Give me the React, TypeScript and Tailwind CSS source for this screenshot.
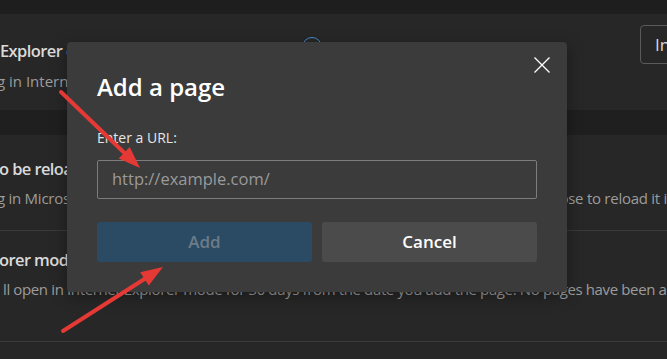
import React from "react";

const FONT = "font-['Open_Sans','Noto_Sans',sans-serif]";

export default function App() {
  return (
    <div className={`relative w-[667px] h-[359px] overflow-hidden bg-[#1f1f1f] ${FONT}`}>
      {/* top strip */}
      <div className="h-[14px] bg-[#1e1e1e]" />

      {/* card 1 */}
      <div className="h-[96px] bg-[#272727] flex items-start overflow-hidden">
        <div className="w-[640px] shrink-0 pt-[25px] overflow-hidden">
          <div className="flex items-start">
            <div className="w-[302px] shrink-0 overflow-hidden whitespace-nowrap text-[16.5px] leading-[24px] font-semibold tracking-[-0.6px] text-[#dadada]">
              Explorer open sites in Microsoft Edge
            </div>
            <span className="mt-[-2px] w-[20px] h-[20px] rounded-full border-[1.5px] border-[#4a8ccc] text-[12px] leading-none flex items-center justify-center text-[#4a8ccc]">?</span>
          </div>
          <div className="mt-[8px] ml-[-3px] w-[560px] overflow-hidden whitespace-nowrap text-[15px] leading-[20px] text-[#9c9c9c]">
            g in Internet Explorer you can choose to automatically open sites in Microsoft Edge
          </div>
        </div>
        <div className="mt-[11px] shrink-0 h-[39px] w-[200px] rounded-[4px] border border-[#5a5a5a] flex items-center pl-[14px] text-[17px] text-[#d8d8d8]">
          Incompatible sites only
        </div>
      </div>

      <div className="h-[25px]" />

      {/* card 2 */}
      <div className="bg-[#272727] h-[224px] flex flex-col overflow-hidden">
        <div className="h-[95px] pt-[22px] overflow-hidden">
          <div className="ml-[-1px] whitespace-nowrap text-[16.5px] leading-[24px] font-semibold tracking-[-0.6px] text-[#dadada]">
            o be reloaded in Internet Explorer mode (IE mode)
          </div>
          <div className="mt-[7px] ml-[-3px] whitespace-nowrap text-[15px] leading-[20px] text-[#9c9c9c] tracking-[-0.26px]">
            g in Microsoft Edge, if a site requires Internet Explorer for compatibility, you can choose to reload it in Internet Explorer mode
          </div>
        </div>
        <div className="h-px bg-[#3a3a3a]" />
        <div className="h-[110px] pt-[17px] overflow-hidden">
          <div className="ml-[-1px] whitespace-nowrap text-[16.5px] leading-[24px] font-semibold tracking-[-0.6px] text-[#dadada]">
            orer mode pages
          </div>
          <div className="mt-[7px] ml-[3px] whitespace-nowrap text-[15px] leading-[20px] text-[#9c9c9c] tracking-[-0.37px]">
            ll open in Internet Explorer mode for 30 days from the date you add the page. No pages have been added to the Internet Explorer mode list yet.
          </div>
        </div>
        <div className="h-px bg-[#3a3a3a]" />
      </div>

      {/* dialog */}
      <div className="absolute left-[67px] top-[42px] w-[500px] h-[250px] rounded-[4px] bg-[#3b3b3b] shadow-[0_4px_16px_rgba(0,0,0,0.35)] flex flex-col px-[30px] pt-[29px] pb-[30px]">
        <button className="absolute right-[17px] top-[15px] w-[16px] h-[16px]">
          <svg width="16" height="16" viewBox="0 0 16 16">
            <path d="M0.5 0.5 L15.5 15.5 M15.5 0.5 L0.5 15.5" stroke="#ffffff" strokeWidth="1.3" />
          </svg>
        </button>
        <div className="text-[24px] leading-[32px] font-semibold text-white">Add a page</div>
        <div className="mt-[25px] text-[14px] leading-[20px] text-[#e6e6e6]">Enter a URL:</div>
        <div className="mt-[12px] h-[39px] rounded-[2px] border border-[#7d7d7d] flex items-center pl-[14px] text-[16.5px] text-[#9a9a9a]">
          http://example.com/
        </div>
        <div className="mt-[23px] flex gap-[10px]">
          <div className="w-[215px] h-[40px] rounded-[3px] bg-[#2b4a63] flex items-center justify-center text-[17px] font-semibold text-[#6c7c88]">
            Add
          </div>
          <div className="w-[215px] h-[40px] rounded-[3px] bg-[#4b4b4b] flex items-center justify-center text-[17px] font-semibold text-white">
            Cancel
          </div>
        </div>
      </div>

      {/* arrows */}
      <svg className="absolute left-0 top-0 pointer-events-none" width="667" height="359" viewBox="0 0 667 359">
        <g fill="#e53935" stroke="#e53935" strokeWidth="4" strokeLinecap="round">
          <line x1="61" y1="92" x2="126" y2="154.5" />
          <polygon points="140,168 118.7,158.6 129.7,147" stroke="none" />
          <line x1="63" y1="331" x2="146" y2="278" />
          <polygon points="163,267 148.8,285.6 140.2,272.2" stroke="none" />
        </g>
      </svg>
    </div>
  );
}
